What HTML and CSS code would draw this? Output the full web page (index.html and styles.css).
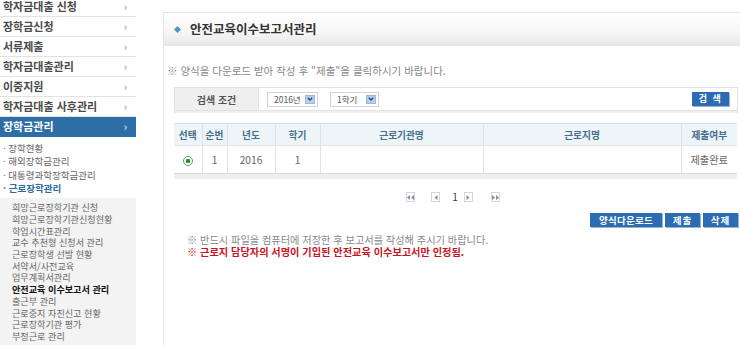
FILE: index.html
```html
<!DOCTYPE html>
<html lang="ko">
<head>
<meta charset="utf-8">
<title>안전교육이수보고서관리</title>
<link rel="stylesheet" href="styles.css">
</head>
<body>
<div class="page">
  <nav class="sidebar">
    <ul class="menu">
      <li class="menu-item"><span>학자금대출 신청</span><i class="chev">›</i></li>
      <li class="menu-item"><span>장학금신청</span><i class="chev">›</i></li>
      <li class="menu-item"><span>서류제출</span><i class="chev">›</i></li>
      <li class="menu-item"><span>학자금대출관리</span><i class="chev">›</i></li>
      <li class="menu-item"><span>이중지원</span><i class="chev">›</i></li>
      <li class="menu-item"><span>학자금대출 사후관리</span><i class="chev">›</i></li>
      <li class="menu-item active"><span>장학금관리</span><i class="chev">›</i></li>
    </ul>
    <ul class="sub">
      <li>· 장학현황</li>
      <li>· 해외장학금관리</li>
      <li>· 대통령과학장학금관리</li>
      <li class="sub-on">· 근로장학관리</li>
    </ul>
    <ul class="subsub">
      <li>희망근로장학기관 신청</li>
      <li>희망근로장학기관신청현황</li>
      <li>학업시간표관리</li>
      <li>교수 추천형 신청서 관리</li>
      <li>근로장학생 선발 현황</li>
      <li>서약서/사전교육</li>
      <li>업무계획서관리</li>
      <li class="cur">안전교육 이수보고서 관리</li>
      <li>출근부 관리</li>
      <li>근로중지 자진신고 현황</li>
      <li>근로장학기관 평가</li>
      <li>부정근로 관리</li>
    </ul>
  </nav>

  <main class="panel">
    <div class="panel-head">
      <span class="diamond"></span>
      <h1 class="title">안전교육이수보고서관리</h1>
    </div>
    <div class="panel-body">
      <p class="notice">※ 양식을 다운로드 받아 작성 후 "제출"을 클릭하시기 바랍니다.</p>

      <div class="search">
        <div class="search-label">검색 조건</div>
        <div class="search-fields">
          <span class="select sel-year">2016년<i class="arrow"><svg width="9" height="8" viewBox="0 0 9 8"><path d="M2 2.5 L4.5 5.2 L7 2.5" fill="none" stroke="#1f4f8f" stroke-width="1.6"/></svg></i></span>
          <span class="select sel-term">1학기<i class="arrow"><svg width="9" height="8" viewBox="0 0 9 8"><path d="M2 2.5 L4.5 5.2 L7 2.5" fill="none" stroke="#1f4f8f" stroke-width="1.6"/></svg></i></span>
        </div>
        <button class="btn btn-search">검 색</button>
      </div>

      <table class="grid">
        <colgroup>
          <col class="c1"><col class="c2"><col class="c3"><col class="c4"><col class="c5"><col class="c6"><col class="c7">
        </colgroup>
        <thead>
          <tr><th>선택</th><th>순번</th><th>년도</th><th>학기</th><th>근로기관명</th><th>근로지명</th><th>제출여부</th></tr>
        </thead>
        <tbody>
          <tr>
            <td><span class="radio"></span></td>
            <td>1</td>
            <td>2016</td>
            <td>1</td>
            <td></td>
            <td></td>
            <td>제출완료</td>
          </tr>
        </tbody>
      </table>
      <div class="grid-foot"></div>

      <div class="pager">
        <span class="pg pg-first"><svg width="7" height="5" viewBox="0 0 7 5"><path d="M3 0 L0 2.5 L3 5Z M7 0 L4 2.5 L7 5Z" fill="#7a8fa8"/></svg></span>
        <span class="pg pg-prev"><svg width="4" height="5" viewBox="0 0 4 5"><path d="M3.5 0 L0.5 2.5 L3.5 5Z" fill="#7a8fa8"/></svg></span>
        <span class="pg-num">1</span>
        <span class="pg pg-next"><svg width="4" height="5" viewBox="0 0 4 5"><path d="M0.5 0 L3.5 2.5 L0.5 5Z" fill="#7a8fa8"/></svg></span>
        <span class="pg pg-last"><svg width="7" height="5" viewBox="0 0 7 5"><path d="M0 0 L3 2.5 L0 5Z M4 0 L7 2.5 L4 5Z" fill="#7a8fa8"/></svg></span>
      </div>

      <div class="actions">
        <button class="btn btn-wide">양식다운로드</button>
        <button class="btn btn-sm">제출</button>
        <button class="btn btn-sm">삭제</button>
      </div>

      <div class="notes">
        <p class="note">※ 반드시 파일을 컴퓨터에 저장한 후 보고서를 작성해 주시기 바랍니다.</p>
        <p class="note note-red">※ 근로지 담당자의 서명이 기입된 안전교육 이수보고서만 인정됨.</p>
      </div>
    </div>
  </main>
</div>
</body>
</html>
```

FILE: styles.css
```css
* { box-sizing: border-box; }
html, body {
  margin: 0;
  padding: 0;
  background: #fff;
  overflow: hidden;
  font-family: "Noto Sans CJK KR", "Noto Sans", sans-serif;
  color: #333;
}
ul, p, h1 { margin: 0; padding: 0; }
ul { list-style: none; }

.page {
  display: flex;
  align-items: flex-start;
  width: 740px;
  height: 345px;
  overflow: hidden;
}

/* ---------- sidebar ---------- */
.sidebar {
  width: 136px;
  flex: none;
  margin-top: -3px;
}
.menu-item {
  height: 20px;
  border-bottom: 1px solid #e2e2e2;
  display: flex;
  align-items: center;
  justify-content: space-between;
  padding: 0 9px 0 3px;
  font-size: 11px;
  font-weight: 700;
  color: #4a4a4a;
  line-height: 19px;
}
.menu-item .chev {
  font-style: normal;
  font-weight: 400;
  font-size: 11px;
  color: #8a8a8a;
}
.menu-item.active {
  background: #2e6ea6;
  color: #fff;
  border-bottom-color: #2e6ea6;
}
.menu-item.active .chev { color: #fff; }

.sub {
  padding: 5px 0 0 3px;
  font-size: 9.5px;
  line-height: 13.3px;
  color: #666;
}
.sub .sub-on {
  color: #2c6aa0;
  font-weight: 700;
}
.subsub {
  margin-top: 3px;
  background: #f3f3f3;
  padding: 4px 0 0 12px;
  font-size: 9.1px;
  line-height: 11.7px;
  color: #666;
  height: 150px;
}
.subsub .cur {
  color: #111;
  font-weight: 700;
}

/* ---------- main panel ---------- */
.panel {
  margin-left: 27px;
  margin-top: 12px;
  width: 577px;
  height: 333px;
  border: 1px solid #e4e4e4;
  border-right: none;
  border-bottom: none;
  flex: none;
}
.panel-head {
  height: 33px;
  display: flex;
  align-items: center;
  padding-left: 11px;
  background: linear-gradient(#ffffff 0%, #f7f7f7 55%, #e9e9e9 100%);
  border-bottom: 1px solid #e6e6e6;
}
.diamond {
  width: 5px;
  height: 5px;
  background: #4f95c8;
  transform: rotate(45deg);
  margin-right: 10px;
  margin-top: 1px;
}
.title {
  font-size: 12.5px;
  font-weight: 700;
  color: #333;
  line-height: 14px;
}

.panel-body {
  padding: 18px 0 0 10px;
  width: 574px;
}
.notice {
  font-size: 10.5px;
  line-height: 14px;
  color: #888;
  margin-left: -7px;
}

.search {
  margin-top: 9px;
  height: 24px;
  border: 1px solid #e2e2e2;
  box-shadow: 0 2px 0 #efefef;
  display: flex;
  align-items: center;
}
.search-label {
  width: 84px;
  height: 100%;
  background: #efefef;
  border-right: 1px solid #e2e2e2;
  display: flex;
  align-items: center;
  justify-content: center;
  font-size: 10px;
  font-weight: 700;
  color: #555;
}
.search-fields {
  flex: 1;
  display: flex;
  align-items: center;
  padding-left: 8px;
  gap: 12px;
}
.select {
  height: 15px;
  border: 1px solid #d4d4d4;
  background: #fff;
  display: flex;
  align-items: center;
  justify-content: space-between;
  padding: 0 2px 0 6px;
  font-size: 8.5px;
  color: #555;
}
.sel-year { width: 51px; }
.sel-term { width: 49px; }
.arrow {
  width: 10px;
  height: 9px;
  background: #b8cdea;
  border: 1px solid #9db6dc;
  display: flex;
  align-items: center;
  justify-content: center;
}
.btn {
  border: none;
  background: #2b6cb2;
  color: #fff;
  font-family: inherit;
  font-weight: 700;
  font-size: 9.5px;
  height: 14px;
  padding: 0;
  line-height: 14px;
  cursor: pointer;
  box-shadow: 1px 1px 0 #9bb3cf;
}
.btn-search {
  width: 37px;
  margin-right: 8px;
  font-size: 9px;
  letter-spacing: 1.5px;
}

.grid {
  margin-top: 12px;
  width: 563px;
  border-collapse: collapse;
  table-layout: fixed;
}
.c1 { width: 28px; }
.c2 { width: 25px; }
.c3 { width: 48px; }
.c4 { width: 45px; }
.c5 { width: 163px; }
.c6 { width: 198px; }
.c7 { width: 56px; }
.grid th, .grid td {
  border-left: 1px solid #dde3e8;
  text-align: center;
  padding: 0;
}
.grid th:first-child, .grid td:first-child { border-left: none; }
.grid th {
  height: 22px;
  background: #eef5f9;
  border-top: 1px solid #d7dfe5;
  border-bottom: 1px solid #dde4ea;
  color: #466d8c;
  font-weight: 700;
  font-size: 9.7px;
}
.grid td {
  height: 28px;
  color: #666;
  font-size: 10.2px;
  border-bottom: 1px solid #dcdcdc;
}
.grid-foot {
  width: 563px;
  height: 5px;
  background: #efefef;
}
.radio {
  display: inline-block;
  width: 10px;
  height: 10px;
  border: 1px solid #5aa05a;
  border-radius: 50%;
  background: radial-gradient(circle, #2f8f2f 0 2px, #fff 2.5px);
  vertical-align: middle;
}

.pager {
  margin-top: 13px;
  display: flex;
  align-items: center;
  justify-content: center;
  padding-right: 6px;
  height: 10px;
}
.pg {
  width: 9px;
  height: 10px;
  border: 1px solid #d6d6d6;
  display: flex;
  align-items: center;
  justify-content: center;
  background: #fff;
}
.pg-first { margin-right: 16px; }
.pg-num {
  font-size: 10px;
  color: #333;
  margin: 0 6px 0 12px;
  line-height: 10px;
}
.pg-next { margin-right: 18px; }

.actions {
  margin-top: 11px;
  width: 564px;
  display: flex;
  justify-content: flex-end;
  gap: 3px;
}
.btn-wide { width: 72px; letter-spacing: 0.3px; }
.btn-sm { width: 35px; letter-spacing: 1px; }

.notes {
  margin-top: 7px;
  padding-left: 13px;
}
.note {
  font-size: 10.2px;
  line-height: 11.5px;
  color: #888;
  white-space: nowrap;
}
.note-red {
  color: #c8141e;
  font-weight: 700;
}
```
